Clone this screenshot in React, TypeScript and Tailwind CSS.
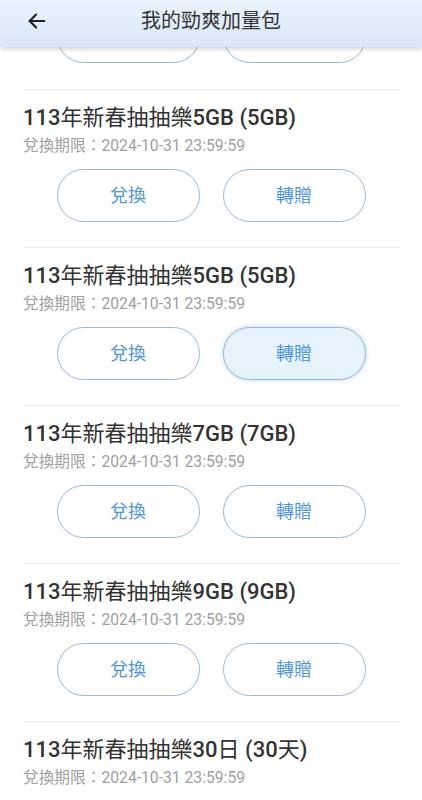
import React from "react";

const items = [
  { title: "113年新春抽抽樂5GB (5GB)", active: false },
  { title: "113年新春抽抽樂5GB (5GB)", active: true },
  { title: "113年新春抽抽樂7GB (7GB)", active: false },
  { title: "113年新春抽抽樂9GB (9GB)", active: false },
  { title: "113年新春抽抽樂30日 (30天)", active: false, noButtons: true },
];

function Title({ text }: { text: string }) {
  const parts = text.split(/([\u4e00-\u9fff]+)/).filter(Boolean);
  return (
    <div className="text-[22px] leading-[28px] text-[#333]">
      {parts.map((p, i) =>
        /[\u4e00-\u9fff]/.test(p) ? (
          <span key={i} className="font-normal">{p}</span>
        ) : (
          <span key={i} className="font-medium">{p}</span>
        )
      )}
    </div>
  );
}

function Btn({ label, active }: { label: string; active?: boolean }) {
  return (
    <button
      className={
        "w-[143px] h-[53px] rounded-full border border-[#98b8d6] text-[18px] text-[#5096d8] flex items-center justify-center " +
        (active ? "bg-[#e6f3fd] shadow-[0_0_4px_rgba(120,180,230,0.6)]" : "bg-white")
      }
    >
      {label}
    </button>
  );
}

function ButtonRow({ active }: { active?: boolean }) {
  return (
    <div className="flex justify-center gap-[23px]">
      <Btn label="兌換" />
      <Btn label="轉贈" active={active} />
    </div>
  );
}

export default function App() {
  return (
    <div
      className="relative w-[422px] h-[800px] overflow-hidden bg-white"
      style={{ fontFamily: "Roboto, 'Noto Sans CJK TC', sans-serif" }}
    >
      <div className="absolute top-0 left-0 right-0 z-10 h-[47px] bg-gradient-to-b from-[#e9f3fd] to-[#d8e7f8] shadow-[0_2px_5px_rgba(0,0,0,0.18)] flex items-center">
        <svg className="absolute left-[26px] top-[10px]" width="22" height="22" viewBox="0 0 24 24" fill="none" stroke="#222" strokeWidth="2.4" strokeLinecap="round" strokeLinejoin="round">
          <path d="M20 12H4" />
          <path d="M11 5l-7 7 7 7" />
        </svg>
        <div className="w-full text-center text-[20px] text-[#333] leading-none pb-[6px]">我的勁爽加量包</div>
      </div>

      <div className="pt-[10px]">
        <ButtonRow />
        <div className="h-[26px]" />
        {items.map((it, i) => (
          <div key={i}>
            <div className="mx-[23px] w-[377px] h-px bg-[#ececec]" />
            <div className="px-[23px] pt-[14px]">
              <Title text={it.title} />
              <div className="mt-[4px] text-[15.7px] leading-[20px] text-[#a0a0a0]">兌換期限：2024-10-31 23:59:59</div>
            </div>
            {!it.noButtons && (
              <>
                <div className="mt-[13px]">
                  <ButtonRow active={it.active} />
                </div>
                <div className="h-[25px]" />
              </>
            )}
          </div>
        ))}
      </div>
    </div>
  );
}
